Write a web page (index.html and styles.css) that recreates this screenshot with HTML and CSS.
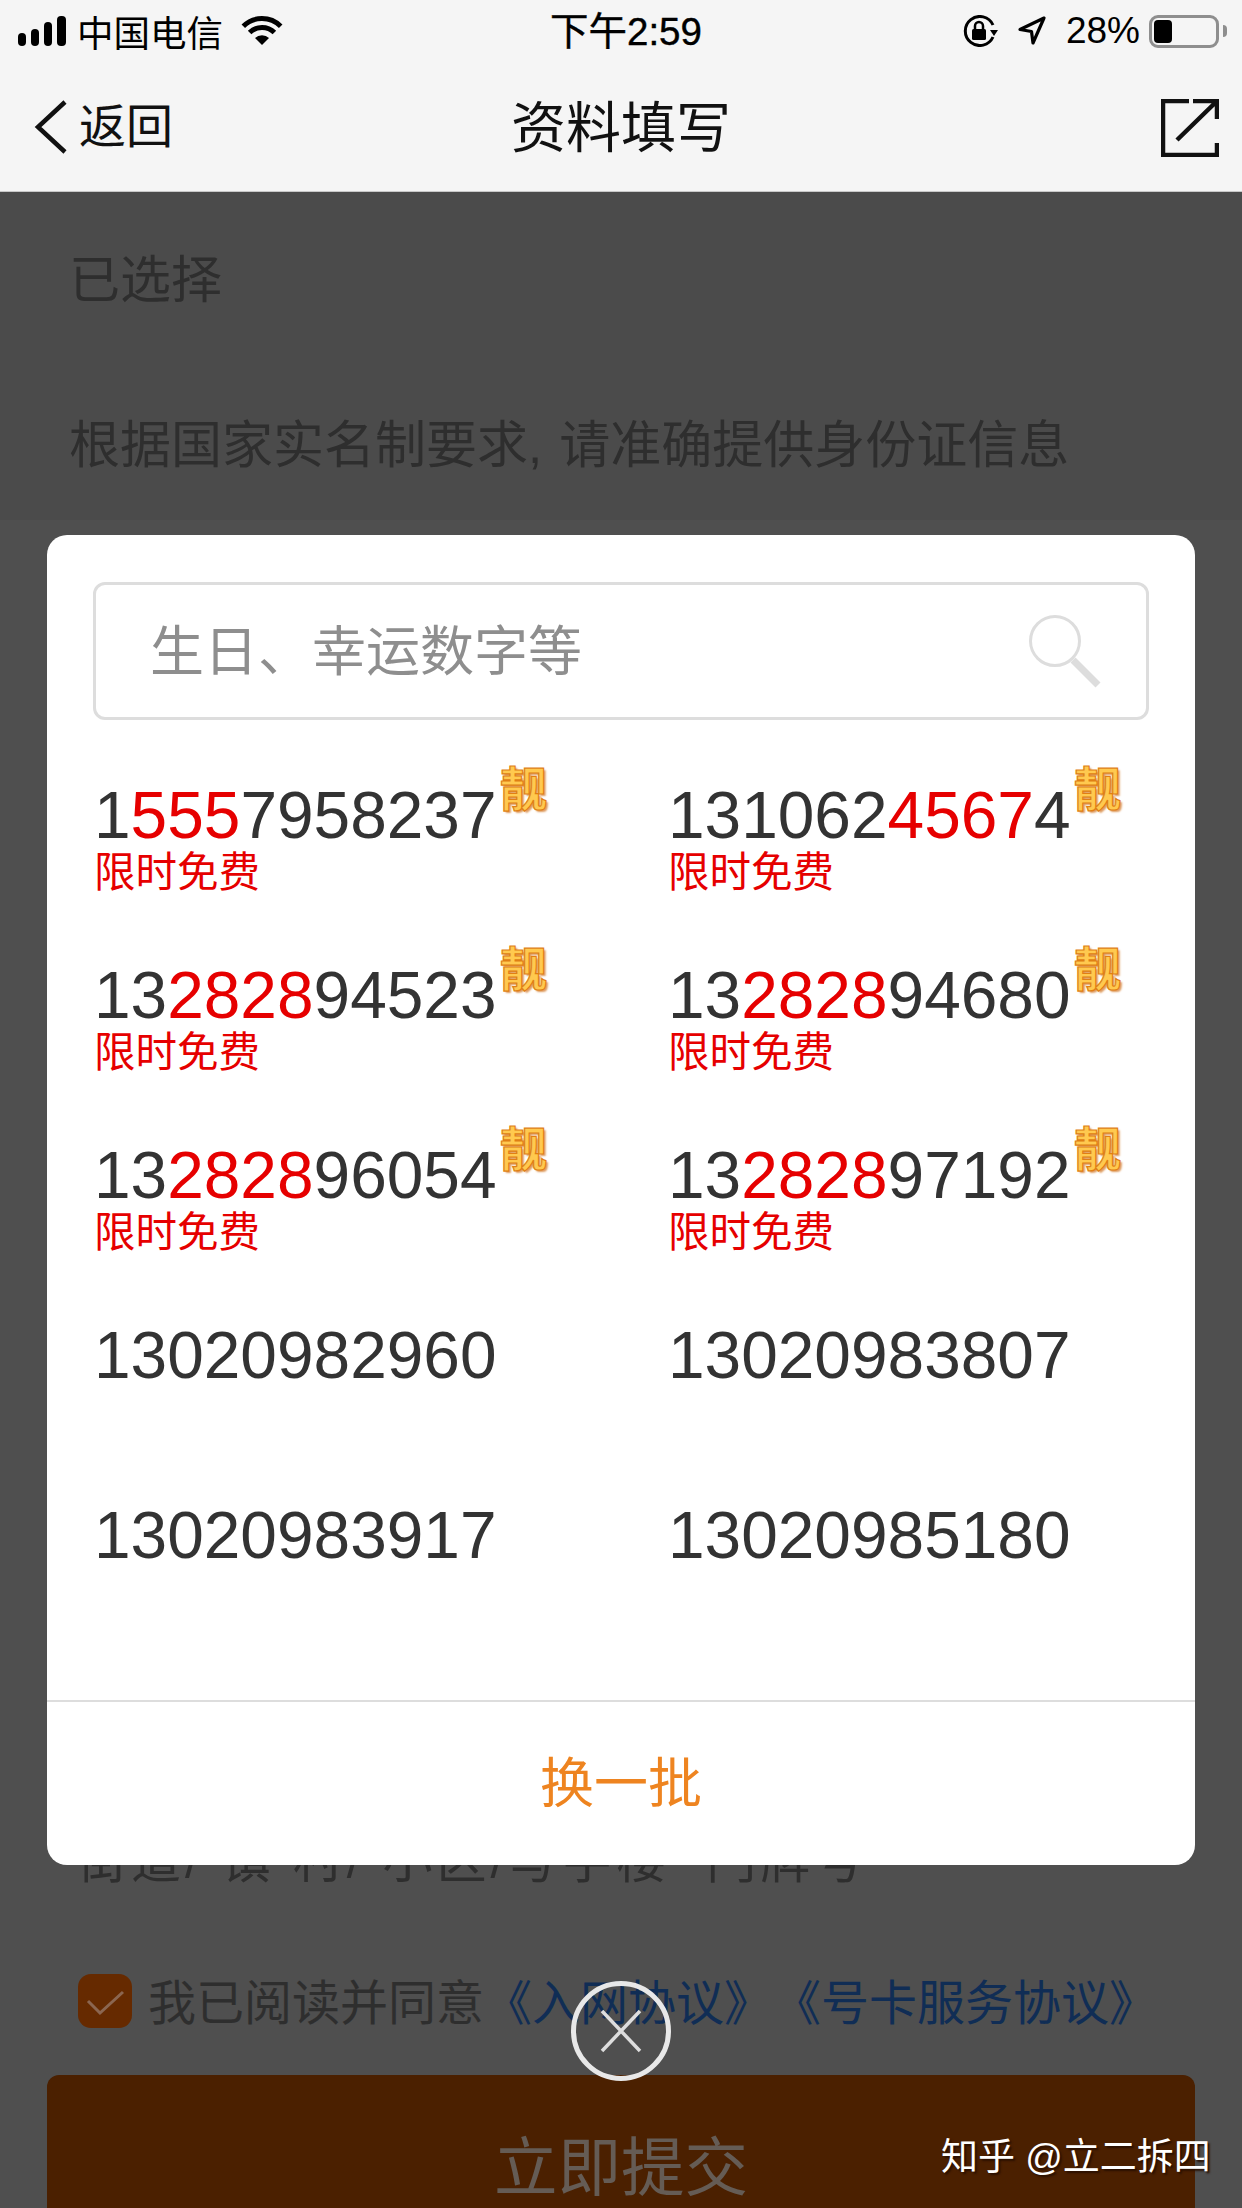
FILE: index.html
```html
<!DOCTYPE html>
<html lang="zh">
<head>
<meta charset="utf-8">
<title>资料填写</title>
<link rel="stylesheet" href="styles.css">
</head>
<body>
<div class="page">
  <header class="status">
    <div class="status-left">
      <svg class="signal" width="50" height="30" viewBox="0 0 50 30"><rect x="0" y="17" width="8" height="13" rx="4"/><rect x="13" y="13" width="8" height="17" rx="4"/><rect x="26" y="6" width="8" height="24" rx="4"/><rect x="39" y="0" width="9" height="30" rx="4"/></svg>
      <span class="carrier">中国电信</span>
      <svg class="wifi" width="42" height="30" viewBox="0 0 42 30"><path d="M2.3 10.3A26.5 26.5 0 0 1 39.7 10.3M8.6 16.6A17.5 17.5 0 0 1 33.4 16.6" fill="none" stroke="#000" stroke-width="5"/><path d="M21 29L14 22A10 10 0 0 1 28 22Z"/></svg>
    </div>
    <div class="time">下午2:59</div>
    <div class="status-right">
      <svg width="36" height="32" viewBox="0 0 36 32"><path d="M30 10A14.5 14.5 0 1 0 30 22" fill="none" stroke="#000" stroke-width="3"/><path d="M27 15h8l-4 6z"/><rect x="9" y="14" width="14" height="11" rx="1.5"/><path d="M12 14v-3a4 4 0 0 1 8 0v3" fill="none" stroke="#000" stroke-width="2.5"/></svg>
      <svg class="arrow" width="30" height="30" viewBox="0 0 30 30"><path d="M27 2L3 13.500L14.500 15.500L16 27Z" fill="none" stroke="#000" stroke-width="3.200" stroke-linejoin="round"/></svg>
      <span class="percent">28%</span>
      <div class="battery"><div class="battery-fill"></div></div>
      <div class="battery-nub"></div>
    </div>
  </header>

  <nav class="nav">
    <div class="nav-back">
      <svg width="34" height="56" viewBox="0 0 34 56"><path d="M31 3L4 28L31 53" fill="none" stroke="#111" stroke-width="4.500"/></svg>
      <span>返回</span>
    </div>
    <div class="nav-title">资料填写</div>
    <div class="nav-share">
      <svg width="58" height="58" viewBox="0 0 58 58"><path d="M28 2H2V56H56V44M16 41L55 3M32 2H56V20" fill="none" stroke="#111" stroke-width="4.500"/></svg>
    </div>
  </nav>

  <main class="main">
    <section class="intro">
      <div class="picked">已选择</div>
      <div class="notice">根据国家实名制要求, 请准确提供身份证信息</div>
    </section>
    <section class="form">
      <div class="address">街道/ 镇 村/ 小区/写字楼  门牌号</div>
      <div class="agree">
        <span class="checkbox"><svg width="54" height="54" viewBox="0 0 54 54"><path d="M10 27L22 39L45 18" fill="none" stroke="#8b6650" stroke-width="3"/></svg></span>
        <span class="agree-text">我已阅读并同意</span><span class="agree-text link">《入网协议》</span><span class="agree-text link link-next">《号卡服务协议》</span>
      </div>
      <div class="submit">立即提交</div>
    </section>
  </main>

  <div class="modal">
    <div class="search">
      <span class="placeholder">生日、幸运数字等</span>
      <svg class="search-icon" width="74" height="78" viewBox="0 0 74 78"><circle cx="26" cy="27" r="24.500" fill="none" stroke="#ddd" stroke-width="3"/><path d="M44 46L69 71" stroke="#ddd" stroke-width="7"/></svg>
    </div>
    <div class="numbers">
      <div class="cell"><div class="num">1<em>555</em>7958237<span class="badge">靓</span></div><div class="free">限时免费</div></div>
      <div class="cell"><div class="num">131062<em>4567</em>4<span class="badge">靓</span></div><div class="free">限时免费</div></div>
      <div class="cell"><div class="num">13<em>2828</em>94523<span class="badge">靓</span></div><div class="free">限时免费</div></div>
      <div class="cell"><div class="num">13<em>2828</em>94680<span class="badge">靓</span></div><div class="free">限时免费</div></div>
      <div class="cell"><div class="num">13<em>2828</em>96054<span class="badge">靓</span></div><div class="free">限时免费</div></div>
      <div class="cell"><div class="num">13<em>2828</em>97192<span class="badge">靓</span></div><div class="free">限时免费</div></div>
      <div class="cell"><div class="num">13020982960</div></div>
      <div class="cell"><div class="num">13020983807</div></div>
      <div class="cell"><div class="num">13020983917</div></div>
      <div class="cell"><div class="num">13020985180</div></div>
    </div>
    <div class="refresh">换一批</div>
  </div>

  <div class="close">
    <svg width="44" height="44" viewBox="0 0 44 44"><path d="M3 2L41 42M41 2L3 42" stroke="#ddd" stroke-width="3.500"/></svg>
  </div>
  <div class="watermark">知乎 @立二拆四</div>
</div>
</body>
</html>
```

FILE: styles.css
```css
* { box-sizing: border-box; }
html, body { margin: 0; padding: 0; }
body { background: #505050; font-family: "Liberation Sans", "Noto Sans CJK SC", sans-serif; }
.page { position: relative; width: 1242px; height: 2208px; overflow: hidden; display: flex; flex-direction: column; }

.status { flex: none; height: 62px; background: #f5f5f5; display: flex; align-items: center; padding: 0 15px 0 18px; color: #000; font-size: 36px; }
.status-left { width: 532px; display: flex; align-items: center; }
.signal { margin-right: 9px; }
.carrier { width: 144px; font-size: 36.500px; white-space: nowrap; }
.wifi { margin-left: 20px; }
.time { font-size: 38.500px; white-space: nowrap; padding-bottom: 6px; -webkit-text-stroke: 0.4px #000; }
.status-right { margin-left: auto; display: flex; align-items: center; }
.status-right > svg:first-child { margin-left: 1px; }
.arrow { margin-left: 18px; }
.percent { margin-left: 19px; font-size: 37px; line-height: 40px; }
.battery { margin-left: 9px; width: 70px; height: 33px; border: 3px solid #8e8e8e; border-radius: 9px; padding: 2px; }
.battery-fill { width: 18px; height: 23px; background: #000; border-radius: 4px; }
.battery-nub { margin-left: 4px; width: 4px; height: 12px; background: #8e8e8e; border-radius: 0 4px 4px 0; }

.nav { flex: none; height: 130px; background: #f5f5f5; border-bottom: 1px solid #c8c8c8; display: grid; grid-template-columns: 1fr auto 1fr; align-items: center; color: #111; }
.nav-back { display: flex; align-items: center; padding-left: 34px; font-size: 47px; }
.nav-back span { margin: 0 0 8px 11px; }
.nav-title { font-size: 55px; padding-bottom: 8px; }
.nav-share { display: flex; justify-content: flex-end; padding-right: 23px; margin-top: 2px; }

.main { flex: 1; min-height: 0; display: flex; flex-direction: column; color: #2e2e2e; font-size: 51px; }
.intro { flex: none; height: 328px; background: #4b4b4b; padding: 39px 0 0 69px; }
.picked { height: 100px; line-height: 100px; }
.notice { margin-top: 65px; height: 100px; line-height: 100px; white-space: nowrap; word-spacing: 3px; }
.form { flex: 1; min-height: 0; background: #4f4f4f; display: flex; flex-direction: column; }
.address { margin: 1311px 0 0 77px; height: 62px; line-height: 60px; font-size: 50px; letter-spacing: 4px; white-space: pre; }
.agree { margin: 81px 0 0 78px; height: 54px; display: flex; align-items: center; font-size: 48px; white-space: nowrap; }
.checkbox { width: 54px; height: 54px; border-radius: 13px; background: #662a00; margin-right: 16px; display: block; }
.checkbox svg { display: block; }
.agree-text { padding-bottom: 5px; }
.link { color: #102d55; }
.link-next { margin-left: 1px; }
.submit { margin: 47px 47px 0; height: 133px; background: #4b2000; border-radius: 12px 12px 0 0; text-align: center; font-size: 63.500px; line-height: 186px; color: #655c55; }

.modal { position: absolute; left: 47px; top: 535px; width: 1148px; height: 1330px; background: #fff; border-radius: 20px; display: flex; flex-direction: column; }
.search { flex: none; margin: 47px 46px 0; height: 138px; border: 3px solid #ddd; border-radius: 12px; display: flex; align-items: center; justify-content: space-between; padding: 0 43px 0 54px; }
.placeholder { font-size: 54px; color: #8e8e8e; padding-bottom: 8px; }
.search-icon { margin-top: 4px; }
.numbers { flex: 1; margin: 62px 0 0 47px; display: grid; grid-template-columns: 574px 1fr; grid-auto-rows: 180px; }
.num { position: relative; width: max-content; font-size: 65.800px; line-height: 66px; color: #333; }
.num em { font-style: normal; color: #e60000; }
.badge { position: absolute; left: 406px; top: -17px; font-size: 47px; line-height: 50px; font-weight: 700; color: #ffc94f; -webkit-text-stroke: 1.2px #e07f14; text-shadow: 2px 2px 2px #dd9a5c; }
.free { margin-top: 4px; font-size: 41.500px; line-height: 42px; color: #e60000; }
.refresh { flex: none; height: 165px; border-top: 2px solid #ddd; text-align: center; line-height: 165px; font-size: 54px; color: #ee8420; }

.close { position: absolute; left: 571px; top: 1981px; width: 100px; height: 100px; border: 5px solid #e8e8e8; border-radius: 50%; display: flex; align-items: center; justify-content: center; }
.watermark { position: absolute; left: 941px; top: 2135px; font-size: 37px; line-height: 46px; color: #fff; white-space: nowrap; text-shadow: 2px 2px 2px #2a1000; }
```
